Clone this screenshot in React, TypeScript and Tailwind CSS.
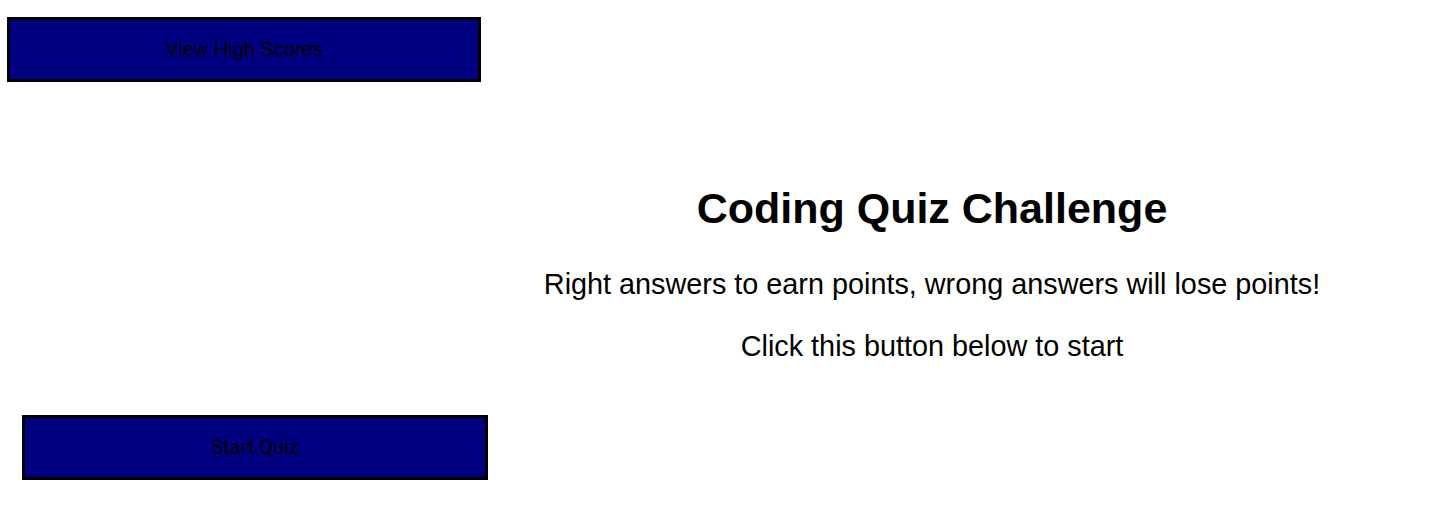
export default function App() {
  return (
    <div className="min-h-[526px] bg-white text-black" style={{ fontFamily: '"Liberation Sans", Arial, sans-serif' }}>
      <div className="pt-[17px] pl-[7px]">
        <button
          className="block w-[474px] h-[65px] border-[3px] border-black bg-[#000080] text-black text-[20px] text-center pb-[2px]"
          style={{ fontFamily: '"Liberation Sans", Arial, sans-serif' }}
        >
          View High Scores
        </button>
      </div>
      <div className="flex">
        <div className="w-[510px] shrink-0 pl-[22px] pt-[333px]">
          <button
            className="block w-[466px] h-[65px] border-[3px] border-black bg-[#000080] text-black text-[20px] text-center pb-[2px]"
            style={{ fontFamily: 'Roboto, sans-serif' }}
          >
            Start Quiz
          </button>
        </div>
        <div className="flex-1 pr-[75px] pt-[101px] text-center">
          <h1 className="text-[43px] leading-[50px] font-bold">Coding Quiz Challenge</h1>
          <p className="mt-[34px] text-[28.8px] leading-[34px] whitespace-nowrap">
            Right answers to earn points, wrong answers will lose points!
          </p>
          <p className="mt-[28px] text-[28.8px] leading-[34px] whitespace-nowrap">Click this button below to start</p>
        </div>
      </div>
    </div>
  );
}
